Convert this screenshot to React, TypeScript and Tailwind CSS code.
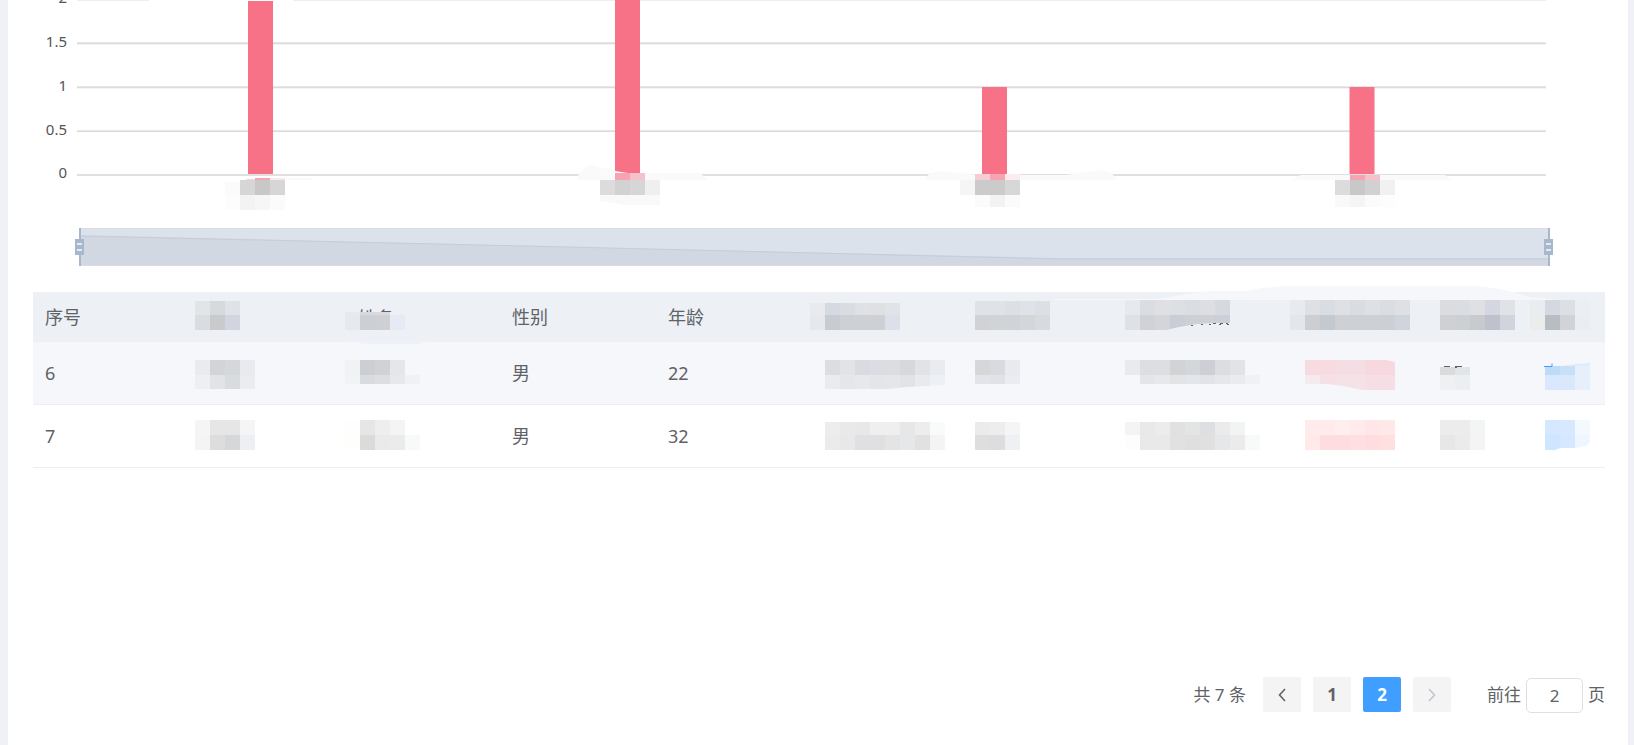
import type { ReactNode } from "react";

type BlockRow = { y: number; h: number; colors: string };
type Cell = { text?: string; rows?: BlockRow[]; under?: ReactNode; over?: ReactNode };

const TILE = 15;

const columns = [
    "w-[150px]",
    "w-[150px]",
    "w-[167px]",
    "w-[156px]",
    "w-[142px]",
    "w-[165px]",
    "w-[150px]",
    "w-[165px]",
    "w-[150px]",
    "w-[90px]",
    "w-[87px]",
];

// two stacked tile rows, "-" leaves a tile empty
function pair(y: number, h: number, top: string, h2: number, bottom: string): BlockRow[] {
    return [
        { y, h, colors: top },
        { y: y + h, h: h2, colors: bottom },
    ];
}

const header: Cell[] = [
    { text: "序号" },
    { rows: pair(9, 14, "#e2e5e8 #d7dadd #dfe2e6", 15, "#d9dce0 #c9cacc #d2d5df") },
    {
        rows: pair(20, 3, "#e9eaee #d8dadf #d8dadf", 15, "#e8e9ed #cccfd3 #cfd0d3 #e6eaf4"),
        under: (
            <>
                <text x="13" y="33" fontSize="18" fill="#606266">姓名</text>
                <rect x="0" y="20" width="60" height="18" fill="#edf1f6" />
            </>
        ),
    },
    { text: "性别" },
    { text: "年龄" },
    {
        rows: pair(
            11, 12, "#e9eaed #d5d9e1 #d9dce0 #dfe1e5 #dfe0e4 #e0e4e9",
            15, "#e7e8eb #c8ccd0 #cdd0d4 #cdd0d4 #cdd0d5 #dce0ea"
        ),
    },
    { rows: pair(9, 14, "#dfe2e7 #dfe2e7 #dce0e5 #dfe3e9 #dcdfe4", 15, "#d1d2d6 #d2d3d7 #d0d4d8 #d4d6da #d7dade") },
    {
        rows: pair(
            8, 15, "#e6eaef #dadde2 #dfdfe4 #dcdfe4 #dadde2 #dddee3 #d6d9de",
            15, "#e0e1e5 #d0d2d7 #d4d5d8 #c8cdd6 #cdd0d4 #cfd0d3 #cccfd7"
        ),
        over: (
            <>
                <path d="M41 38 L54 35 L72 32 L90 31 H105 V38 Z" fill="#edf1f6" />
                <path
                    d="M66 33.5h2M76 32.5h2M84 32.5h2M88 31.5h3M95.5 31v2M89.5 31v1M96 31.5h2M94.5 32v1M101 31.5h2M102 32.5h2"
                    stroke="#606266"
                    strokeWidth="1"
                />
            </>
        ),
    },
    {
        rows: pair(
            8, 15, "#e7ebf0 #dee0e4 #d9dce0 #dee0e4 #d9dce0 #dee0e4 #dadde2 #dee0e4",
            15, "#e3e6eb #cdced2 #c4c8d0 #cfd0d4 #cdd0d4 #cdd0d4 #cccfd4 #d0d4dd"
        ),
    },
    { rows: pair(8, 15, "#dadce0 #dadde2 #dee0e4 #d4d7e1 #e0e2e7", 15, "#cfd0d4 #ccd0d3 #c9cacd #bfc2cc #d2d4dd") },
    { rows: pair(8, 15, "#e9edef #d6d8e1 #dcdfe4 #ebeef2", 15, "#ececed #b8bcc3 #d1d3d8 #eaedf1") },
];

const rowSix: Cell[] = [
    { text: "6" },
    { rows: pair(18, 15, "#e9ebef #d3d4d6 #d5d7db #e7eaef", 14, "#eeeff3 #e1e3e6 #d8dcdf #ebecf0") },
    { rows: pair(18, 15, "#f1f2f4 #cbced5 #d1d2d6 #e3e7ea", 9, "#f2f3f6 #d9dcdf #dddee2 #e7e8ec #f0f1f5") },
    { text: "男" },
    { text: "22" },
    {
        rows: pair(
            18, 15, "- #dcdddf #e2e3e6 #d9dbdf #dadde3 #dcdde1 #d7d8dd #e2e3e7 #e8ecef",
            14, "- #eaebed #e5e6ea #e7e8ec #e4e5e9 #e5e6ea #e2e3e7 #e9eaee #edf1f5"
        ),
        over: <path d="M78 47 L97 45 L135 43 V47 Z" fill="#f5f7fb" />,
    },
    { rows: pair(18, 15, "#d6d7d9 #d9dadf #e9eaef", 9, "#e3e4e9 #e1e2e7 #ebecf1") },
    {
        rows: pair(
            18, 15, "#e9eaef #dddee2 #dddee2 #d2d3d4 #d3d7db #cccfd6 #dcdde1 #e0e4e8",
            9, "- #e4e5e9 #e7e8ec #e3e4e6 #e3e6ea #e2e3e8 #e6e7eb #eaebee #eff1f5"
        ),
    },
    {
        rows: pair(
            18, 15, "- #f7dbe0 #f7dbe0 #f5dee3 #f5dee3 #f7d8de #f7d8de",
            15, "- #f5ebef #f5e0e5 #f5e2e6 #f5e2e6 #f5dfe4 #f5dfe4"
        ),
        over: <path d="M15 42 H37 L53 44 L72 48 H15 Z M96 18 L105 20 V18 Z" fill="#f5f7fb" />,
    },
    {
        rows: pair(25, 8, "#dadbdd #e3e4e8", 15, "#eef0f1 #ebeef2"),
        over: <path d="M4 24.5h6M15 24.5h7M15 25.5h2" stroke="#606266" strokeWidth="1" />,
    },
    {
        rows: pair(24, 9, "- #bddbf9 #c8dff9 #e7effb", 15, "- #d9e8fc #d9e8fc #e7effb"),
        over: (
            <>
                <path d="M32 24 L44 22 L60 21 V24 Z" fill="#e0ebfb" />
                <path d="M14 24.5h8v-3" fill="none" stroke="#409eff" strokeWidth="1" />
            </>
        ),
    },
];

const rowSeven: Cell[] = [
    { text: "7" },
    { rows: pair(15, 15, "#f5f5f5 #e6e6e6 #e6e6e6 #f5f5f5", 15, "#f4f4f4 #dddddd #d6d7d9 #eeeff2") },
    { rows: pair(15, 15, "#fefefc #e6e6e6 #eeeeee #f3f5f4", 15, "#fefefc #dbdbdb #e8ebe9 #ebebeb #f7faf8") },
    { text: "男" },
    { text: "32" },
    {
        rows: pair(
            17, 13, "- #ededed #e9e9e9 #e8e8e8 #edeff1 #efefef #e5e7e9 #ededed #f8fbfa",
            15, "- #ebebeb #e8e8e8 #dfe0e2 #e0e0e2 #e4e4e4 #e5e7e9 #e1e1e1 #f4f4f4"
        ),
    },
    { rows: pair(17, 13, "#ebebeb #ededed #f5f5f5", 15, "#dedede #dddddf #eef0f3") },
    {
        rows: pair(
            17, 13, "#f3f5f4 #e9e9e9 #ececec #e1e1e1 #e3e5e4 #dedfe2 #ebebeb #f2f4f3",
            15, "#fdfdfd #e9e9e9 #e9e9e9 #e1e1e1 #dfdfdf #dfe0df #e5e7e9 #ebebeb #f7faf8"
        ),
    },
    {
        rows: pair(
            15, 15, "- #ffebeb #ffebeb #ffeeee #ffebeb #ffe6e8 #ffe8e8",
            15, "- #ffe9e9 #ffdcdf #ffdcdf #ffdfe1 #ffdcdf #ffe0e1"
        ),
    },
    { rows: pair(15, 15, "#ececec #ececec #f3f5f4", 15, "#e7e7e7 #ebebeb #f4f4f4") },
    {
        rows: pair(15, 15, "- #d5e8ff #d8e9ff #f4f9ff", 15, "- #d0e5ff #d5e8ff #eef6ff"),
        over: <path d="M25 45 L30 43 H46 L56 41 L60 37 V45 Z" fill="#ffffff" />,
    },
];

function Tiles({ x = 0, y, h, colors }: BlockRow & { x?: number }) {
    return (
        <g shapeRendering="crispEdges">
            {colors.split(" ").map((color, i) =>
                color === "-" ? null : (
                    <rect key={i} x={x + i * TILE} y={y} width={TILE} height={h} fill={color} />
                )
            )}
        </g>
    );
}

function CellContent({ cell }: { cell: Cell }) {
    if (cell.text) return <>{cell.text}</>;
    return (
        <svg aria-hidden="true" className="block h-12 w-full overflow-visible">
            {cell.under}
            {cell.rows?.map((row) => <Tiles key={row.y} {...row} />)}
            {cell.over}
        </svg>
    );
}

const ticks = [
    { label: "2", y: 3 },
    { label: "1.5", y: 47 },
    { label: "1", y: 91 },
    { label: "0.5", y: 135 },
    { label: "0", y: 178 },
];

const bars = [
    { x: 248, y: 1, bottom: 174 },
    { x: 615, y: 0, bottom: 174 },
    { x: 982, y: 87, bottom: 174 },
    { x: 1349.5, y: 87, bottom: 174 },
];

function Handle({ x }: { x: number }) {
    return (
        <g>
            <rect x={x - 1} y="228" width="2" height="38" fill="#a7b7cc" />
            <rect x={x - 5} y="239" width="9" height="16" fill="#a7b7cc" />
            <path d={`M${x - 3} 244h5M${x - 3} 250h5`} stroke="#e6ebf2" strokeWidth="2" />
        </g>
    );
}

function Chart() {
    return (
        <svg viewBox="8 0 1620 292" className="block h-auto w-full" role="img" aria-label="bar chart">
            <path d="M77 0H149V1H77ZM293 0H1546V1H293Z" fill="#eeeeee" />
            {[42, 86, 130].map((y) => (
                <g key={y} shapeRendering="crispEdges">
                    <rect x="77" y={y} width="1469" height="1" fill="#e7e7e7" />
                    <rect x="77" y={y + 1} width="1469" height="1" fill="#dcdcdc" />
                    <rect x="77" y={y + 2} width="1469" height="1" fill={y === 130 ? "#fdfdfd" : "#f4f4f4"} />
                </g>
            ))}
            <rect x="77" y="174" width="1469" height="2" fill="#e0e0e0" />
            {ticks.map((t) => (
                <text key={t.label} x="67" y={t.y} textAnchor="end" fontSize="15" fill="#555555">
                    {t.label}
                </text>
            ))}
            {bars.map((b) => (
                <rect key={b.x} x={b.x} y={b.y} width="25" height={b.bottom - b.y} fill="#f77287" />
            ))}

            <path
                d="M576 180 L580 172 L587 166 L592 165 L600 167 L615 171 L628 173 H700 L708 180 Z
                   M924 180 L930 173 L940 171 L960 173 L978 175 H1067 L1100 170 L1110 172 L1118 180 Z
                   M1292 180 L1301 175 H1445 L1452 180 Z M285 178 H312 V180 H285 Z"
                fill="#fafafa"
            />
            <path d="M246 179H259V180H246Z" fill="#f7d3da" />
            <Tiles x={255} y={178} h={2} colors="#f7a3b1 #fce8eb" />
            <Tiles x={225} y={182} h={13} colors="#fbfbfb" />
            <Tiles x={240} y={180} h={15} colors="#d6d6d6 #c8c8c8 #d6d6d6" />
            <Tiles x={225} y={195} h={15} colors="#fdfdfd #f3f3f3 #f6f6f6 #fbfbfb" />

            <Tiles x={615} y={173} h={7} colors="#f7a3b1 #f6c1ca" />
            <Tiles x={600} y={180} h={15} colors="#dcdcdc #d2d2d2 #d6d6d6 #efefef" />
            <path d="M600 195H660V205H624L600 201Z" fill="#f9f9f9" />

            <Tiles x={975} y={174} h={6} colors="#f7cdd5 #f7a3b1 #fbecee" />
            <Tiles x={960} y={180} h={15} colors="#f5f5f5 #cbcbcb #cbcbcb #d7d7d7" />
            <Tiles x={975} y={195} h={12} colors="#fbfbfb #f3f3f3 #fbfbfb" />

            <Tiles x={1350} y={175} h={5} colors="#f7a3b1 #f6c1ca" />
            <Tiles x={1335} y={180} h={15} colors="#dcdcdc #c8c8c8 #d1d1d1 #f1f1f1" />
            <Tiles x={1335} y={195} h={12} colors="#f9f9f9 #f5f5f5 #fbfbfb #fdfdfd" />

            <rect x="79" y="228" width="1470" height="38" fill="#dadde0" />
            <rect x="79" y="229" width="1470" height="36" fill="#dbe2ec" />
            <path d="M79 235 L569 247 L1059 258 H1549 V265 H79 Z" fill="#d1d8e2" />
            <path d="M79 236 L569 247 L1059 259 H1549" fill="none" stroke="#c5ccda" strokeWidth="1" />
            <Handle x={80} />
            <Handle x={1549} />
        </svg>
    );
}

function DataTable() {
    return (
        <div className="relative">
            <table className="w-full table-fixed border-separate border-spacing-0 text-left text-[18px] leading-6">
                <colgroup>
                    {columns.map((width, i) => (
                        <col key={i} className={width} />
                    ))}
                </colgroup>
                <thead>
                    <tr className="h-[50px] bg-[#edf1f6]">
                        {header.map((cell, i) => (
                            <th key={i} scope="col" className={`border-b border-[#ebeef2] py-0 pl-3 font-normal ${cell.text ? "align-middle" : "align-top"}`}>
                                <CellContent cell={cell} />
                            </th>
                        ))}
                    </tr>
                </thead>
                <tbody>
                    {[rowSix, rowSeven].map((row, r) => (
                        <tr key={r} className={`h-[63px] ${r === 0 ? "bg-[#f5f7fb]" : "bg-white"}`}>
                            {row.map((cell, i) => (
                                <td key={i} className={`border-b border-[#ebeef5] py-0 pl-3 ${cell.text ? "align-middle" : "align-top"}`}>
                                    <CellContent cell={cell} />
                                </td>
                            ))}
                        </tr>
                    ))}
                </tbody>
            </table>
            <svg aria-hidden="true" viewBox="33 286 1572 60" className="pointer-events-none absolute -top-1.5 left-0 w-full">
                <path
                    d="M1054 299 H1158 L1175 296 L1195 293 L1210 291 H1245 L1262 288 L1285 286 H1475 L1500 289 L1516 293 L1530 297 L1552 299 V300 H1054 Z"
                    fill="#f5f7fb"
                />
                <path d="M349 341 H425 L420 344 H366 Z M1276 341 H1504 V342 H1276 Z" fill="#eef1f7" />
            </svg>
        </div>
    );
}

const pageButton = "flex h-[35px] w-[38px] items-center justify-center rounded-[2px] font-bold";

function Pagination() {
    return (
        <nav aria-label="pagination" className="mt-[209px] flex h-9 items-start justify-end text-[17px] leading-[35px]">
            <span className="mr-[17px]">共 7 条</span>
            <div className="flex gap-3">
                <button type="button" aria-label="上一页" className={`${pageButton} bg-[#f4f4f5]`}>
                    <svg width="8" height="14" viewBox="0 0 8 14" fill="none" stroke="currentColor" strokeWidth="1.6">
                        <path d="M7 1 L1.5 7 L7 13" />
                    </svg>
                </button>
                <button type="button" className={`${pageButton} bg-[#f4f4f5]`}>1</button>
                <button type="button" aria-current="page" className={`${pageButton} bg-[#409eff] text-white`}>2</button>
                <button type="button" aria-label="下一页" disabled className={`${pageButton} bg-[#f4f4f5] text-[#c0c4cc]`}>
                    <svg width="8" height="14" viewBox="0 0 8 14" fill="none" stroke="currentColor" strokeWidth="1.6">
                        <path d="M1 1 L6.5 7 L1 13" />
                    </svg>
                </button>
            </div>
            <label className="ml-9 flex">
                前往
                <input
                    type="text"
                    defaultValue="2"
                    aria-label="页码"
                    className="mx-[5px] mt-px h-[35px] w-[57px] rounded-[5px] border border-[#dcdfe6] bg-white text-center"
                />
                页
            </label>
        </nav>
    );
}

export default function App() {
    return (
        <div className="min-h-screen bg-[#f0f1f6] pr-1.5 pl-2 font-['Noto_Sans','Noto_Sans_CJK_SC',sans-serif] text-[#606266]">
            <main className="min-h-screen bg-white pb-8">
                <Chart />
                <div className="pr-[23px] pl-[25px]">
                    <DataTable />
                    <Pagination />
                </div>
            </main>
        </div>
    );
}
